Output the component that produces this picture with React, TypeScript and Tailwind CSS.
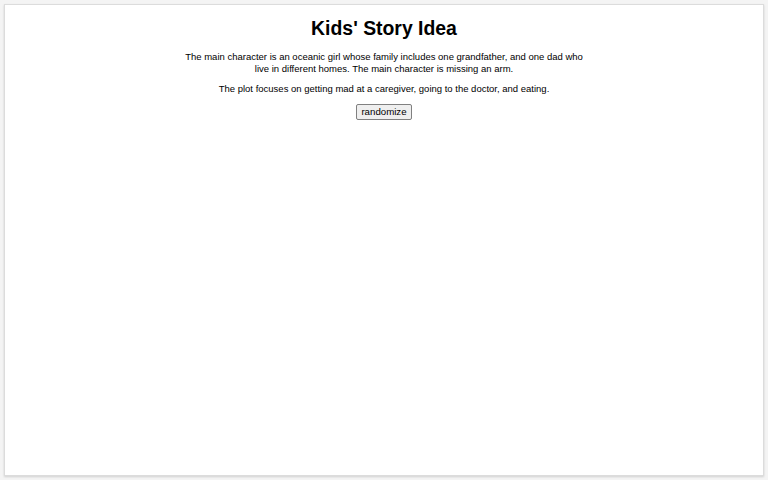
import React, { useState } from 'react';

const characters = [
  'The main character is an oceanic girl whose family includes one grandfather, and one dad who live in different homes. The main character is missing an arm.',
];

const plots = [
  'The plot focuses on getting mad at a caregiver, going to the doctor, and eating.',
];

function App() {
  const [idx, setIdx] = useState(0);

  const randomize = () => {
    setIdx(prev => (prev + 1) % characters.length);
  };

  return (
    <div className="min-h-screen bg-[#f4f4f4] p-[4px] font-['Liberation_Sans',Arial,sans-serif] text-black">
      <div className="h-[472px] bg-white border border-[#dcdcdc] shadow-[0_1px_2px_rgba(0,0,0,0.15)] flex flex-col items-center pt-[11px]">
        <h1 className="text-[19.4px] font-bold leading-[24px] mb-[11px]">Kids' Story Idea</h1>
        <div className="max-w-[410px] text-center text-[9.5px] leading-[12px]">
          <p className="mb-[8px]">{characters[idx]}</p>
          <p className="mb-[9px]">{plots[idx]}</p>
        </div>
        <button
          onClick={randomize}
          className="text-[9.7px] leading-[12px] px-[4px] py-[1px] bg-[#efefef] border border-[#808080] rounded-[2px]"
        >
          randomize
        </button>
      </div>
    </div>
  );
}

export default App;
